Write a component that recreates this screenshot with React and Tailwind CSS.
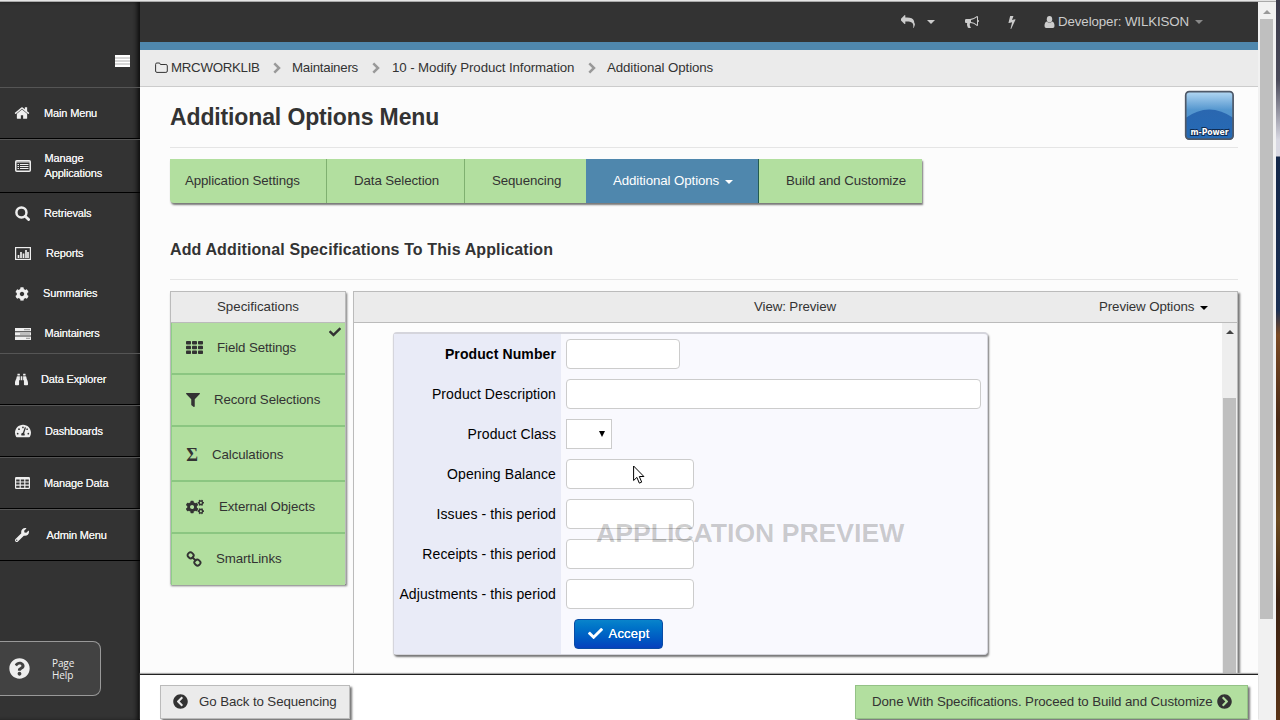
import {
  FaBinoculars, FaCheck, FaChevronCircleLeft, FaChevronCircleRight,
  FaCog, FaCogs, FaFilter, FaQuestionCircle, FaTachometerAlt, FaWrench,
} from 'react-icons/fa'

function Glyph({ d, className }) {
  return (
    <svg viewBox="0 0 1792 1792" fill="currentColor" className={className}>
      <path d={d} />
    </svg>
  )
}

const HOME = 'M1472 992v480q0 26-19 45t-45 19h-384v-384h-256v384h-384q-26 0-45-19t-19-45v-480q0-1 .5-3t.5-3l575-474 575 474q1 2 1 6zm223-69l-62 74q-8 9-21 11h-3q-13 0-21-7l-692-577-692 577q-12 8-24 7-13-2-21-11l-62-74q-8-10-7-23.5t11-21.5l719-599q32-26 76-26t76 26l244 204v-195q0-14 9-23t23-9h192q14 0 23 9t9 23v408l219 182q10 8 11 21.5t-7 23.5z'
const REPLY = 'M1792 1120q0 166-127 451-3 7-10.5 24t-13.5 30-13 22q-12 17-28 17-15 0-23.5-10t-8.5-25q0-9 2.5-26.5t2.5-23.5q5-68 5-123 0-112-19.5-200.5t-54-153.5-89-112-120-74.5-148-48-173.5-21.5-196.5-6h-224v256q0 26-19 45t-45 19-45-19l-512-512q-19-19-19-45t19-45l512-512q19-19 45-19t45 19 19 45v256h224q713 0 875 403 53 134 53 333z'
const BULLHORN = 'M1664 640q53 0 90.5 37.5t37.5 90.5-37.5 90.5-90.5 37.5v384q0 52-38 90t-90 38q-417-347-812-380-58 19-91 66t-31 100.5 40 92.5q-20 33-23 65.5t6 58 33.5 55 48 50 61.5 50.5q-29 58-111.5 83t-168.5 11.5-132-55.5q-7-23-29.5-87.5t-32-94.5-23-89-15-101 3.5-98.5 22-110.5h-122q-66 0-113-47t-47-113v-192q0-66 47-113t113-47h480q435 0 896-384 52 0 90 38t38 90v384zm-128 604v-954q-394 302-768 343v270q377 42 768 341z'
const BOLT = 'M1333 566q18 20 7 44l-540 1157q-13 25-42 25-4 0-14-2-17-5-25.500-19t-4.500-30l197-808-406 101q-4 1-12 1-18 0-31-11-18-15-13-39l201-825q4-14 16-23t28-9h328q19 0 32 12.500t13 29.500q0 8-5 18l-171 463 396-98q8-2 12-2 19 0 34 15z'

function ListIcon() {
  return (
    <svg viewBox="0 0 16 12" className="w-4 h-3">
      <rect x=".75" y=".75" width="14.500" height="10.500" rx="1" fill="none" stroke="currentColor" strokeWidth="1.500" />
      <path d="M1 2h14M2.500 4.500H4M5 4.500h8.500M2.500 6.500H4M5 6.500h8.500M2.500 8.500H4M5 8.500h8.500" stroke="currentColor" strokeWidth="1.200" />
    </svg>
  )
}

function ChartIcon() {
  return (
    <svg viewBox="0 0 16 13" className="w-4 h-[13px]">
      <rect x=".6" y=".6" width="14.800" height="11.800" fill="none" stroke="currentColor" strokeWidth="1.200" />
      <path d="M3.500 11V8M6 11V5M8.500 11V6.500M11 11V3M13 11V5" stroke="currentColor" strokeWidth="1.700" />
    </svg>
  )
}

function ServerIcon() {
  return (
    <svg viewBox="0 0 16 12" className="w-4 h-3">
      <path d="M0 0h16v3.300H0zM0 4.300h16v3.300H0zM0 8.600h16V12H0z" fill="currentColor" />
      <path d="M9 1.700h6M5 6h10M11 10.300h4" stroke="#333" strokeWidth=".5" />
    </svg>
  )
}

function TableIcon() {
  return (
    <svg viewBox="0 0 15 12" className="w-[15px] h-3">
      <rect width="15" height="12" rx="1.200" fill="currentColor" />
      <path d="M1.200 2.500h3.400v2H1.200zM5.800 2.500h3.400v2H5.800zM10.400 2.500h3.400v2h-3.400zM1.200 5.600h3.400v2H1.200zM5.800 5.600h3.400v2H5.800zM10.400 5.600h3.400v2h-3.400zM1.200 8.700h3.400v2H1.200zM5.800 8.700h3.400v2H5.800zM10.400 8.700h3.400v2h-3.400z" fill="#333" />
    </svg>
  )
}

function SearchIcon() {
  return (
    <svg viewBox="0 0 14 14" fill="none" stroke="currentColor" className="size-[15px]">
      <circle cx="6" cy="6" r="4.700" strokeWidth="2.300" />
      <path d="M9.500 9.500l3.200 3.200" strokeWidth="2.600" strokeLinecap="round" />
    </svg>
  )
}

function UserIcon() {
  return (
    <svg viewBox="0 0 10 12" fill="currentColor" className="ml-[25px] w-[11px] h-3">
      <ellipse cx="5" cy="3.200" rx="2.700" ry="3.200" />
      <path d="M2.300 5.500Q5 8 7.700 5.500 10 6.300 10 10q0 2-1.700 2H1.700Q0 12 0 10 0 6.300 2.300 5.500z" />
    </svg>
  )
}

function GridIcon() {
  return (
    <svg viewBox="0 0 17 13" fill="currentColor" className="w-[17px] h-[13px]">
      {[0, 4.7, 9.4].map((y) => [0, 6, 12].map((x) => <rect key={x + '-' + y} x={x} y={y} width="5" height="3.600" rx=".8" />))}
    </svg>
  )
}

function LinkIcon() {
  return (
    <svg viewBox="0 0 16 16" fill="none" stroke="currentColor" strokeWidth="1.900" className="size-4">
      <rect x="1.700" y="1.600" width="5.800" height="5.400" rx="2.200" transform="rotate(45 4.600 4.300)" />
      <rect x="8.500" y="8.900" width="5.800" height="5.400" rx="2.200" transform="rotate(45 11.400 11.600)" />
      <path d="M5.800 6l4.600 4" />
    </svg>
  )
}

function FolderIcon() {
  return (
    <svg viewBox="0 0 13 12" fill="none" stroke="currentColor" className="w-[13px] h-3">
      <path d="M.6 2.300q0-1.300 1.300-1.300h2.200q1.200 0 1.300 1.500h5.500q1.400 0 1.400 1.300v5.200q0 1.400-1.400 1.400h-9Q.6 10.400.6 9z" />
    </svg>
  )
}

function Chevron() {
  return (
    <svg viewBox="0 0 8 12" fill="none" className="ml-[13px] w-2 h-3 shrink-0 text-[#999]">
      <path d="M1.300 1.300L6 6l-4.700 4.700" stroke="currentColor" strokeWidth="2.500" />
    </svg>
  )
}

function Caret({ className }) {
  return <span className={`${className} border-x-4 border-t-4 border-x-transparent border-t-current`} />
}

const menu = [
  { label: 'Main Menu', icon: <Glyph d={HOME} className="size-4 -ml-px" />, row: 'h-[51px] border-b-black', gap: 'pl-[44px]' },
  { label: 'Manage Applications', icon: <ListIcon />, row: 'h-[54px] border-t border-t-[#555] border-b-black', gap: 'pl-[44.500px]' },
  { label: 'Retrievals', icon: <SearchIcon />, row: 'h-[41px] border-b-transparent', gap: 'pl-[44px]' },
  { label: 'Reports', icon: <ChartIcon />, row: 'h-10 border-b-transparent', gap: 'pl-[46px]' },
  { label: 'Summaries', icon: <FaCog className="size-3.5" />, row: 'h-10 border-b-transparent', gap: 'pl-[43px]' },
  { label: 'Maintainers', icon: <ServerIcon />, row: 'h-10 border-b-[#555]', gap: 'pl-[44.500px]' },
  { label: 'Data Explorer', icon: <FaBinoculars className="size-[13px]" />, row: 'h-[51px] border-b-black', gap: 'pl-[41px]' },
  { label: 'Dashboards', icon: <FaTachometerAlt className="size-4" />, row: 'h-[52px] border-t border-t-[#555] border-b-black', gap: 'pl-[45px]' },
  { label: 'Manage Data', icon: <TableIcon />, row: 'h-[52px] border-t border-t-[#555] border-b-black', gap: 'pl-[44px]' },
  { label: 'Admin Menu', icon: <FaWrench className="size-3.5" />, row: 'h-[52px] border-t border-t-[#555] border-b-black', gap: 'pl-[46.500px]' },
]

function Sidebar() {
  return (
    <aside className="relative w-[140px] shrink-0 bg-[#333] text-[#eee] flex flex-col shadow-[inset_-4px_0_4px_-1px_#111]">
      <div className="h-[86px] shrink-0 border-b border-[#555] flex justify-end pr-[10px] pt-[53px]">
        <svg viewBox="0 0 15 12" className="w-[15px] h-3 text-white">
          <rect width="15" height="12" fill="currentColor" />
          <path d="M0 3h15M0 6h15M0 9h15" stroke="#999" strokeWidth=".8" />
        </svg>
      </div>
      {menu.map((m) => (
        <div key={m.label} className={`${m.row} shrink-0 border-b flex items-center`}>
          <span className="w-0 pl-[15px] shrink-0">{m.icon}</span>
          <span className={`${m.gap} -ml-[15px] w-[116px] shrink-0 text-[11px] leading-[15px] tracking-[-.15px] [text-shadow:0_0_.5px_#fff]`}>{m.label}</span>
        </div>
      ))}
      <div className="mt-auto mb-6 w-[101px] h-[55px] border border-l-0 border-[#999] rounded-r-lg bg-[#424242] flex items-center">
        <FaQuestionCircle className="ml-[9px] size-[21px] text-[#eee]" />
        <span className="ml-[22px] font-['Open_Sans',sans-serif] text-[10px] leading-3">Page<br />Help</span>
      </div>
    </aside>
  )
}

function TopBar() {
  return (
    <div className="h-10 shrink-0 bg-[#333] text-[#ccc] flex items-center">
      <Glyph d={REPLY} className="size-3.5 ml-[761px]" />
      <Caret className="ml-3" />
      <Glyph d={BULLHORN} className="size-3.5 ml-[30px]" />
      <Glyph d={BOLT} className="size-3.5 ml-[26px]" />
      <UserIcon />
      <span className="ml-[3px] w-[132px] whitespace-nowrap">Developer: WILKISON</span>
      <Caret className="ml-[5px] text-[#888]" />
    </div>
  )
}

function Breadcrumb() {
  return (
    <div className="h-[37px] shrink-0 bg-[#ebebeb] border-b border-[#ccc] flex items-center pl-[15px] whitespace-nowrap">
      <FolderIcon />
      <span className="ml-[3px] w-[89px] tracking-[-.3px]">MRCWORKLIB</span>
      <Chevron />
      <span className="ml-[11px] w-[67px] tracking-[-.25px]">Maintainers</span>
      <Chevron />
      <span className="ml-[12px] w-[183px]">10 - Modify Product Information</span>
      <Chevron />
      <span className="ml-[11px]">Additional Options</span>
    </div>
  )
}

function Logo() {
  return (
    <svg viewBox="0 0 50 50" className="size-[50px]">
      <defs>
        <linearGradient id="sky" x1="0" y1="0" x2="0" y2="1">
          <stop offset="0" stopColor="#b4d8f3" />
          <stop offset=".38" stopColor="#5597cf" />
          <stop offset="1" stopColor="#4389c6" />
        </linearGradient>
        <linearGradient id="hill" x1="0" y1="0" x2="0" y2="1">
          <stop offset="0" stopColor="#2a67b0" />
          <stop offset="1" stopColor="#256ab5" />
        </linearGradient>
      </defs>
      <rect x="1.500" y="1.500" width="48" height="48" rx="4" fill="url(#sky)" />
      <path d="M1.500 28Q25 11 49.500 28V45.500q0 4-4 4h-40q-4 0-4-4z" fill="url(#hill)" />
      <rect x="1.700" y="1.700" width="47.400" height="47.400" rx="3.500" fill="none" stroke="#4f5968" strokeWidth="1.700" />
      <text x="25.500" y="45.300" textAnchor="middle" textLength="38" lengthAdjust="spacingAndGlyphs" fill="#fff" stroke="#102c52" strokeWidth="1.800" paintOrder="stroke" fontFamily="DejaVu Sans" fontWeight="bold" fontSize="8">m-Power</text>
    </svg>
  )
}

function Tabs() {
  return (
    <div className="mt-[11px] w-[752px] h-[44px] flex bg-[#b2df9f] shadow-[1px_2px_2px_#777] whitespace-nowrap rounded-bl-sm">
      <div className="w-[157px] pl-[15px] pt-3 border-r border-[#7fb070]">Application Settings</div>
      <div className="w-[138px] pl-[27px] pt-3 border-r border-[#7fb070]">Data Selection</div>
      <div className="w-[121px] pl-[27px] pt-3">Sequencing</div>
      <div className="w-[173px] pl-[27px] h-[44px] flex items-center pb-[1px] bg-[#4f87ad] text-white border-r border-[#245c50]">
        Additional Options<Caret className="ml-[6px] mt-0.5" />
      </div>
      <div className="pl-[27px] pt-3">Build and Customize</div>
    </div>
  )
}

const specs = [
  { label: 'Field Settings', icon: <GridIcon />, cls: 'h-[52px] pb-px', gap: 'ml-[14px]', done: true },
  { label: 'Record Selections', icon: <FaFilter className="size-3.5" />, cls: 'h-[52px]', gap: 'ml-[14px]' },
  { label: 'Calculations', icon: <span className="font-['Liberation_Serif',serif] font-bold text-[18px] leading-4 w-3 text-center">Σ</span>, cls: 'h-[55px] pt-0.5', gap: 'ml-[14px]' },
  { label: 'External Objects', icon: <FaCogs className="size-[18px]" />, cls: 'h-[52px]', gap: 'ml-[15px]' },
  { label: 'SmartLinks', icon: <LinkIcon />, cls: 'h-[51px] pb-0.5', gap: 'ml-[14px]' },
]

function Specifications() {
  return (
    <div className="w-[176px] h-[293px] shrink-0 shadow-[1px_2px_2px_#777] border border-[#bbb] border-b-0">
      <div className="h-[31px] bg-[#ebebeb] border-b border-[#bbb] flex items-center justify-center tracking-[0]">Specifications</div>
      {specs.map((s) => (
        <div key={s.label} className={`${s.cls} relative bg-[#b2df9f] border-b-2 border-b-[#8bc681] border-l border-l-[#8fcf88] flex items-center pl-[14px] last:border-b-0`}>
          {s.icon}
          <span className={s.gap}>{s.label}</span>
          {s.done && <FaCheck className="absolute right-1 top-[3px] size-3" />}
        </div>
      ))}
    </div>
  )
}

const fields = [
  { label: 'Product Number', width: 'w-[114px]', bold: true },
  { label: 'Product Description', width: 'w-[415px]' },
  { label: 'Product Class', select: true },
  { label: 'Opening Balance', width: 'w-[128px]' },
  { label: 'Issues - this period', width: 'w-[128px]' },
  { label: 'Receipts - this period', width: 'w-[128px]' },
  { label: 'Adjustments - this period', width: 'w-[128px]' },
]

function PreviewForm() {
  return (
    <div className="relative ml-[39px] mt-[9px] w-[595px] h-[323px] border border-[#d5d5dc] border-t-2 rounded bg-[#f9f9fe] shadow-[1px_2px_2px_#777] text-sm text-black">
      <div className="h-full w-full flex flex-col bg-[linear-gradient(to_right,#e9ebf7_167px,transparent_167px)]">
        {fields.map((f) => (
          <div key={f.label} className="h-10 flex items-center">
            <span className={`w-[162px] text-right whitespace-nowrap tracking-[.1px] ${f.bold ? 'font-bold' : ''}`}>{f.label}</span>
            {f.select ? (
              <span className="ml-[10px] w-[46px] h-[30px] bg-white border border-[#ccc] flex items-center justify-end pr-[6px]">
                <span className="border-x-[3.500px] border-t-[6px] border-x-transparent border-t-black" />
              </span>
            ) : (
              <span className={`${f.width} ml-[10px] h-[30px] bg-white border border-[#ccc] rounded`} />
            )}
          </div>
        ))}
        <button className="ml-[180px] mt-[5px] w-[89px] h-[30px] rounded bg-linear-to-b from-[#0a84cb] to-[#0840bd] border border-[#0a4ca5] text-white text-[13px] tracking-[.2px] flex items-center justify-center gap-[6px] [text-shadow:0_0_.5px_#fff]">
          <FaCheck className="size-[15px] mb-0.5" />Accept
        </button>
      </div>
      <div className="absolute left-[202px] top-[184px] text-[26.600px] leading-[30px] tracking-[0] font-bold text-black/20 whitespace-nowrap">APPLICATION PREVIEW</div>
      <svg viewBox="0 0 12 19" className="absolute left-[239px] top-[131px] w-3 h-[19px]">
        <path d="M.6 1v14.500l3.300-3.100 2.400 5.700 2.400-1-2.400-5.600h4.600z" fill="#fff" stroke="#000" />
      </svg>
    </div>
  )
}

function Preview() {
  return (
    <div className="ml-[7px] w-[885px] h-[400px] border border-[#bbb] shadow-[2px_2px_2px_#777] flex flex-col">
      <div className="h-[31px] shrink-0 bg-[#ebebeb] border-b border-[#bbb] flex items-center">
        <span className="ml-[400px] w-[83px] whitespace-nowrap">View: Preview</span>
        <span className="ml-[262px] w-[95px] whitespace-nowrap">Preview Options</span>
        <Caret className="ml-[6px] mt-0.5 text-black" />
      </div>
      <div className="flex-1 flex justify-between bg-[#fdfdfd]">
        <PreviewForm />
        <div className="w-[15px] bg-[#eee] flex flex-col items-center">
          <span className="mt-[7px] mb-[64px] border-x-4 border-b-4 border-x-transparent border-b-[#444]" />
          <span className="w-[13px] flex-1 bg-[#bfbfbf]" />
        </div>
      </div>
    </div>
  )
}

function Footer() {
  return (
    <div className="h-[46px] shrink-0 relative bg-white border-t border-[#222] shadow-[0_-1px_1px_#aaa] flex items-start justify-between pt-[10px] pl-5 pr-[10px]">
      <div className="w-[190px] h-[34px] bg-[#ebebeb] border border-[#bbb] shadow-[2px_2px_2px_#777] flex items-center pl-3 gap-[11px] whitespace-nowrap">
        <FaChevronCircleLeft className="size-[15px] mb-px" />Go Back to Sequencing
      </div>
      <div className="w-[393px] h-[34px] bg-[#b2df9f] border border-[#94c286] shadow-[2px_2px_2px_#777] flex items-center pl-4 gap-1 whitespace-nowrap">
        <span className="w-[341px] tracking-[-.08px]">Done With Specifications. Proceed to Build and Customize</span>
        <FaChevronCircleRight className="size-[15px] mb-px shrink-0" />
      </div>
    </div>
  )
}

export default function App() {
  return (
    <div className="w-[1280px] h-[720px] overflow-hidden flex bg-[#333] font-['Liberation_Sans',Arial,sans-serif] text-[13.300px] leading-5 tracking-[-.1px] text-[#333]">
      <div className="w-[1276px] shrink-0 flex flex-col">
        <div className="h-[2px] shrink-0 bg-[#e5e5e5] border-b border-[#aaa]" />
        <div className="flex-1 flex min-h-0">
          <Sidebar />
          <div className="w-[1118px] flex flex-col bg-[#fcfcfc]">
            <TopBar />
            <div className="h-2 shrink-0 bg-[#4f87ad]" />
            <Breadcrumb />
            <main className="flex-1 min-h-0 overflow-hidden pl-[30px]">
              <div className="w-[1068px] h-[61px] flex justify-between border-b border-[#e5e5e5] pr-1 pt-[3px]">
                <h1 className="pt-[10px] text-[23px] leading-[34px] font-bold tracking-[-.13px]">Additional Options Menu</h1>
                <Logo />
              </div>
              <Tabs />
              <h2 className="w-[1068px] h-[77px] pt-[35px] border-b border-[#e5e5e5] text-base font-bold tracking-[.12px]">Add Additional Specifications To This Application</h2>
              <div className="mt-[11px] flex items-start">
                <Specifications />
                <Preview />
              </div>
            </main>
            <Footer />
          </div>
          <div className="w-[18px] pr-px bg-[#f1f1f1] flex flex-col items-center">
            <span className="mt-2 mb-[5px] border-x-4 border-b-4 border-x-transparent border-b-[#999]" />
            <span className="w-[13px] h-[600px] bg-[#bfbfbf]" />
          </div>
        </div>
      </div>
      <div className="flex-1 bg-[linear-gradient(to_bottom,#3a3a4a_0,#4a4a5a_80px,#d8d8e2_140px,#d8d8e2_156px,#14284a_157px,#1c3054_310px,#7a4a25_335px,#4a2a16_420px,#6b4a20_520px,#3a2010_600px,#5a3418_720px)]" />
    </div>
  )
}
